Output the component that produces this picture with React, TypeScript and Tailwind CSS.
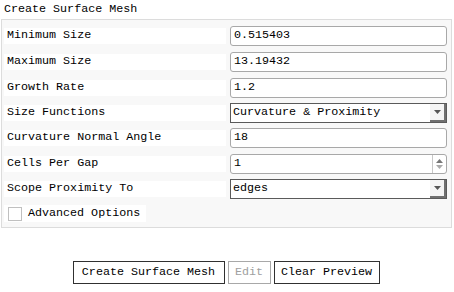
import { ReactNode } from "react";

const font = "font-['Liberation_Mono','DejaVu_Sans_Mono',monospace] text-[11.7px] text-black";

const Label = ({ children }: { children: ReactNode }) => (
  <div className="w-[222px] h-[16px] bg-white flex items-center pl-[3px] leading-none">
    {children}
  </div>
);

const TextBox = ({ value }: { value: string }) => (
  <div className="w-[217px] h-[20px] border border-[#a8a8a8] rounded-[3px] bg-white flex items-center pl-[3px] leading-none">
    {value}
  </div>
);

const Select = ({ value }: { value: string }) => (
  <div className="w-[217px] h-[20px] border border-[#5a5a5a] bg-white flex items-center leading-none">
    <span className="flex-1 pl-[2px]">{value}</span>
    <div className="w-[16px] h-[18px] bg-[#f4f4f4] border-r-2 border-b-2 border-[#707070] flex items-center justify-center">
      <svg width="7" height="4" viewBox="0 0 7 4">
        <path d="M0 0h7L3.5 4z" fill="#555" />
      </svg>
    </div>
  </div>
);

const Spinner = ({ value }: { value: string }) => (
  <div className="w-[217px] h-[20px] border border-[#a8a8a8] rounded-[3px] bg-white flex items-center leading-none">
    <span className="flex-1 pl-[3px]">{value}</span>
    <div className="w-[14px] h-full border-l border-[#c8c8c8] flex flex-col items-center justify-center gap-[2px]">
      <svg width="7" height="4" viewBox="0 0 7 4">
        <path d="M3.5 0L7 4H0z" fill="#777" />
      </svg>
      <svg width="7" height="4" viewBox="0 0 7 4">
        <path d="M0 0h7L3.5 4z" fill="#aaa" />
      </svg>
    </div>
  </div>
);

const Row = ({ h, children }: { h: string; children: ReactNode }) => (
  <div className={`flex items-center gap-[4px] ${h}`}>{children}</div>
);

export default function App() {
  return (
    <div className={`w-[454px] h-[292px] bg-white ${font}`}>
      <div className="h-[19px] pl-[4px] pt-[4px] leading-none">Create Surface Mesh</div>
      <div className="mx-[1px] w-[451px] h-[209px] border border-[#dcdcdc] bg-[#f8f8f8] pl-[2px] pt-[3px]">
        <Row h="h-[26px]">
          <Label>Minimum Size</Label>
          <TextBox value="0.515403" />
        </Row>
        <Row h="h-[26px]">
          <Label>Maximum Size</Label>
          <TextBox value="13.19432" />
        </Row>
        <Row h="h-[25px]">
          <Label>Growth Rate</Label>
          <TextBox value="1.2" />
        </Row>
        <Row h="h-[25px]">
          <Label>Size Functions</Label>
          <Select value="Curvature & Proximity" />
        </Row>
        <Row h="h-[26px]">
          <Label>Curvature Normal Angle</Label>
          <TextBox value="18" />
        </Row>
        <Row h="h-[25px]">
          <Label>Cells Per Gap</Label>
          <Spinner value="1" />
        </Row>
        <Row h="h-[25px]">
          <Label>Scope Proximity To</Label>
          <Select value="edges" />
        </Row>
        <div className="h-[25px] flex items-center">
          <div className="w-[142px] h-[17px] bg-white flex items-center pl-[4px] gap-[6px] leading-none">
            <div className="w-[14px] h-[14px] border border-[#c0c0c0] bg-white" />
            <span>Advanced Options</span>
          </div>
        </div>
      </div>
      <div className="flex justify-center gap-[3px] pt-[33px] pr-[2px]">
        <button className="h-[23px] w-[152px] border border-[#303030] bg-white leading-none">
          Create Surface Mesh
        </button>
        <button className="h-[23px] w-[43px] border border-[#a8a8a8] bg-white text-[#a0a0a0] leading-none">
          Edit
        </button>
        <button className="h-[23px] w-[106px] border border-[#303030] bg-white leading-none">
          Clear Preview
        </button>
      </div>
    </div>
  );
}
